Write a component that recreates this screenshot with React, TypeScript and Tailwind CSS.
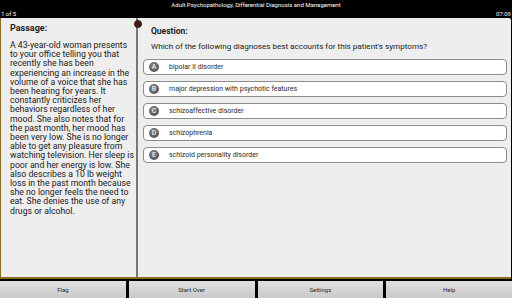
import React from 'react'

const passageLines = [
  'A 43-year-old woman presents',
  'to your office telling you that',
  'recently she has been',
  'experiencing an increase in the',
  'volume of a voice that she has',
  'been hearing for years. It',
  'constantly criticizes her',
  'behaviors regardless of her',
  'mood. She also notes that for',
  'the past month, her mood has',
  'been very low. She is no longer',
  'able to get any pleasure from',
  'watching television. Her sleep is',
  'poor and her energy is low. She',
  'also describes a 10 lb weight',
  'loss in the past month because',
  'she no longer feels the need to',
  'eat. She denies the use of any',
  'drugs or alcohol.',
]

const options = [
  { letter: 'A', text: 'bipolar II disorder' },
  { letter: 'B', text: 'major depression with psychotic features' },
  { letter: 'C', text: 'schizoaffective disorder' },
  { letter: 'D', text: 'schizophrenia' },
  { letter: 'E', text: 'schizoid personality disorder' },
]

const buttons = ['Flag', 'Start Over', 'Settings', 'Help']

export default function App() {
  return (
    <div className="w-[512px] h-[298px] bg-black flex flex-col overflow-hidden font-['Roboto',sans-serif]">
      {/* Header */}
      <div className="h-[18px] flex flex-col text-white text-[6px] leading-[7px] px-[1px]">
        <div className="text-center pt-[1px]">
          Adult Psychopathology, Differential Diagnosis and Management
        </div>
        <div className="flex justify-between pt-[2px]">
          <span>1 of 5</span>
          <span>07:09</span>
        </div>
      </div>

      {/* Main panel */}
      <div className="relative h-[261px] mr-[1px] flex bg-[#eeeeee] rounded-tr-[2px] border-l-[1px] border-b-[2px] border-[#8a6d1e]">
        <div className="absolute left-[133px] top-[2px] w-[8px] h-[8px] rounded-full bg-[#4a1a10] border border-[#222]" />

        {/* Passage */}
        <div className="w-[137px] shrink-0 border-r-[2px] border-[#777] pl-[9px] pt-[5px] text-[#222]">
          <div className="text-[9px] font-bold leading-[10px]">Passage:</div>
          <div className="mt-[8px] text-[8.7px] leading-[9.2px] whitespace-nowrap">
            {passageLines.map((l) => (
              <div key={l}>{l}</div>
            ))}
          </div>
        </div>

        {/* Question */}
        <div className="flex-1 pl-[5px] pr-[4px] pt-[8px] text-[#222]">
          <div className="pl-[8px] text-[8.5px] font-bold leading-[10px]">Question:</div>
          <div className="pl-[8px] mt-[5px] text-[8.1px] leading-[10px]">
            Which of the following diagnoses best accounts for this patient&apos;s symptoms?
          </div>
          <div className="mt-[8px] flex flex-col gap-[6px]">
            {options.map((o) => (
              <div
                key={o.letter}
                className="h-[16px] flex items-center rounded-[4px] border border-[#8c8c8c] bg-white pl-[5px]"
              >
                <span className="w-[10px] h-[10px] rounded-full bg-[radial-gradient(circle_at_40%_35%,#8a8a8a,#3c3c3c)] text-white text-[7px] leading-[10px] flex items-center justify-center">
                  {o.letter}
                </span>
                <span className="ml-[10px] text-[7px] text-[#2a2a2a]">{o.text}</span>
              </div>
            ))}
          </div>
        </div>
      </div>

      {/* Bottom buttons */}
      <div className="mt-[2px] flex-1 flex gap-[3px]">
        {buttons.map((b) => (
          <div
            key={b}
            className="flex-1 flex items-center justify-center bg-gradient-to-b from-[#e2e2e2] to-[#c9c9c9] text-[#2a2a2a] text-[6px]"
          >
            {b}
          </div>
        ))}
      </div>
    </div>
  )
}
